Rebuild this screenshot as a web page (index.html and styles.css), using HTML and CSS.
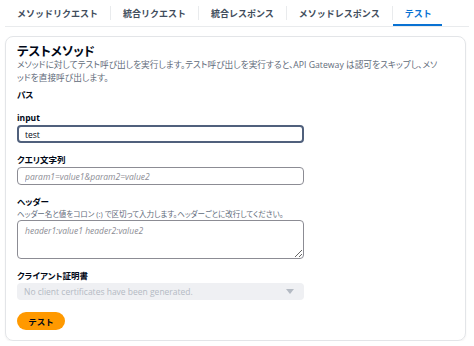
FILE: index.html
```html
<!DOCTYPE html>
<html lang="ja">
<head>
    <meta charset="UTF-8">
    <meta name="viewport" content="width=device-width, initial-scale=1.0">
    <title>テストメソッド</title>
    <link rel="stylesheet" href="styles.css">
</head>

<body>
    <!-- タブ -->
    <div class="tabs">
        <div class="tab">メソッドリクエスト</div>
        <span class="sep"></span>
        <div class="tab">統合リクエスト</div>
        <span class="sep"></span>
        <div class="tab">統合レスポンス</div>
        <span class="sep"></span>
        <div class="tab">メソッドレスポンス</div>
        <span class="sep"></span>
        <div class="tab active">テスト</div>
    </div>

    <div class="card">
        <h2 class="card-title">テストメソッド</h2>
        <p class="card-desc">メソッドに対してテスト呼び出しを実行します。テスト呼び出しを実行すると、API Gateway は認可をスキップし、メソッドを直接呼び出します。</p>

        <div class="section-title">パス</div>

        <div class="field first">
            <label for="input">input</label>
            <input type="text" id="input" class="text-input focused" value="test">
        </div>

        <div class="field">
            <label for="query">クエリ文字列</label>
            <input type="text" id="query" class="text-input" placeholder="param1=value1&amp;param2=value2">
        </div>

        <div class="field">
            <label for="headers">ヘッダー</label>
            <div class="field-desc">ヘッダー名と値をコロン (:) で区切って入力します。ヘッダーごとに改行してください。</div>
            <textarea id="headers" class="text-area" placeholder="header1:value1 header2:value2"></textarea>
        </div>

        <div class="field">
            <label for="cert">クライアント証明書</label>
            <div class="select" id="cert">
                <span>No client certificates have been generated.</span>
                <span class="caret"></span>
            </div>
        </div>

        <button class="test-button">テスト</button>
    </div>
</body>
</html>
```

FILE: styles.css
```css
body {
    margin: 0;
    font-family: 'Open Sans', 'Noto Sans CJK JP', sans-serif;
    background-color: #ffffff;
    color: #000716;
}

.tabs {
    display: flex;
    align-items: center;
    height: 26px;
    margin: 0 5px;
    border-bottom: 1px solid #e9ebed;
}

.tab {
    display: flex;
    align-items: center;
    height: 26px;
    padding: 0 12px;
    font-size: 9px;
    font-weight: bold;
    color: #414d5c;
    box-sizing: border-box;
}

.tab.active {
    color: #0972d3;
    padding-right: 10px;
    box-shadow: inset 0 -2px 0 #0972d3;
}

.sep {
    width: 1px;
    height: 14px;
    background-color: #e9ebed;
}

.card {
    margin: 9px 8px 0 5px;
    padding: 8px 11px 10px 11px;
    border: 1px solid #e3e5e8;
    border-radius: 8px;
    box-shadow: 0 1px 2px rgba(0, 7, 22, 0.06);
    font-feature-settings: "palt";
}

.card-title {
    margin: 0;
    font-size: 12.5px;
    line-height: 14px;
    font-weight: bold;
}

.card-desc {
    margin: 0;
    max-width: 426px;
    font-size: 8.7px;
    line-height: 13px;
    color: #5f6b7a;
}

.section-title {
    margin-top: 4px;
    font-size: 8.5px;
    line-height: 12px;
    font-weight: bold;
}

.field {
    margin-top: 11px;
}

.field label {
    display: block;
    font-size: 8.5px;
    line-height: 12px;
    font-weight: bold;
    margin-bottom: 1px;
}

.field-desc {
    font-size: 7.5px;
    line-height: 10px;
    color: #5f6b7a;
    margin-bottom: 1px;
}

.text-input {
    display: block;
    width: 287px;
    height: 18px;
    padding: 0 7px;
    font-family: 'Open Sans', 'Noto Sans CJK JP', sans-serif;
    font-size: 8.5px;
    color: #000716;
    border: 1px solid #8c8c94;
    border-radius: 4px;
    box-sizing: border-box;
    outline: none;
}

.text-input.focused {
    border: 2px solid #50607c;
    padding: 0 6px;
}

.text-input::placeholder,
.text-area::placeholder {
    font-style: italic;
    color: #8c8c94;
}

.text-area {
    display: block;
    width: 287px;
    height: 39px;
    padding: 4px 7px;
    font-family: 'Open Sans', 'Noto Sans CJK JP', sans-serif;
    font-size: 8.5px;
    border: 1px solid #8c8c94;
    border-radius: 4px;
    box-sizing: border-box;
    resize: vertical;
    outline: none;
}

.select {
    display: flex;
    align-items: center;
    justify-content: space-between;
    width: 287px;
    height: 17px;
    padding: 0 10px 0 7px;
    font-size: 8.5px;
    color: #b4bac3;
    background-color: #eff0f3;
    border-radius: 4px;
    box-sizing: border-box;
}

.caret {
    width: 0;
    height: 0;
    border-left: 4px solid transparent;
    border-right: 4px solid transparent;
    border-top: 5px solid #b4bac3;
}

.test-button {
    display: block;
    margin-top: 12px;
    width: 48px;
    height: 18px;
    padding: 0;
    font-family: 'Open Sans', 'Noto Sans CJK JP', sans-serif;
    font-size: 8.5px;
    font-weight: bold;
    color: #000716;
    background-color: #ff9900;
    border: none;
    border-radius: 9px;
    cursor: pointer;
}
```
